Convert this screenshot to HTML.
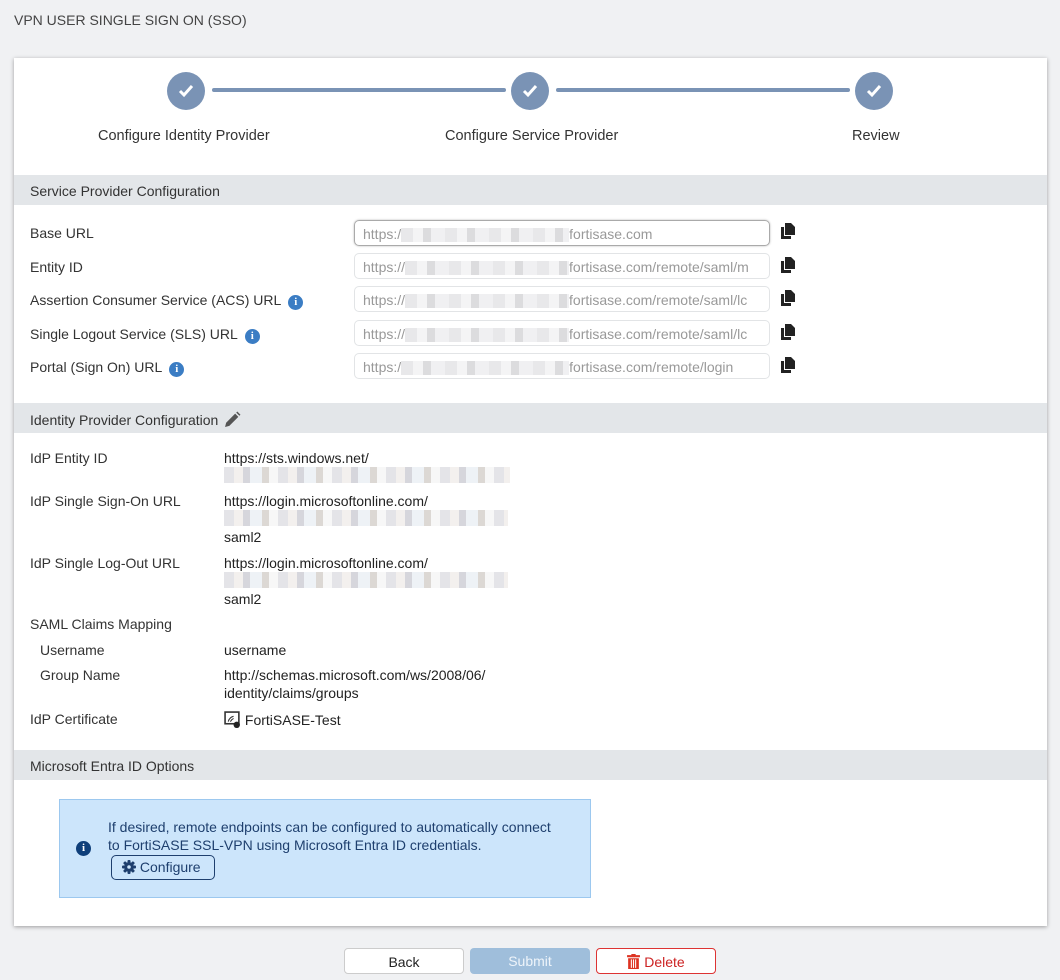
<!DOCTYPE html>
<html><head><meta charset="utf-8"><style>
*{box-sizing:border-box;margin:0;padding:0}
body{width:1060px;height:980px;background:#f0f1f3;font-family:"Liberation Sans",sans-serif;font-size:14px;color:#222;position:relative;overflow:hidden}
.a{position:absolute;white-space:nowrap}
.card{position:absolute;left:14px;top:58px;width:1033px;height:868px;background:#fff;box-shadow:0 1px 4px rgba(0,0,0,.35)}
.sec{position:absolute;left:0;width:1033px;height:30px;background:#e3e6e9;padding:8px 0 0 16px;color:#333}
.circ{position:absolute;width:38px;height:38px;border-radius:50%;background:#7a93b5;top:14px}
.circ svg{position:absolute;left:11px;top:12px}
.line{position:absolute;top:30px;height:4px;background:#7a93b5;border-radius:2px}
.inp{position:absolute;left:340px;width:416px;height:26px;border:1px solid #e2e4e6;border-radius:5px;color:#999;padding:5px 0 0 8px;overflow:hidden;white-space:nowrap}
.blur{display:inline-block;vertical-align:middle;height:14px;background:repeating-linear-gradient(90deg,#e8e8ea 0 12px,#f4f4f5 12px 22px,#dcdcde 22px 30px,#f0f0f2 30px 44px)}
.blur2{position:absolute;height:16px;background:repeating-linear-gradient(90deg,#e4e4e8 0 10px,#f3f0ee 10px 19px,#d6d6dc 19px 26px,#eef2f6 26px 38px,#dcd8d4 38px 45px,#f7f7f7 45px 54px)}
.lbl{position:absolute;left:16px;color:#333;white-space:nowrap}
.val{position:absolute;left:210px;color:#222;white-space:nowrap}
.info{display:inline-block;width:15px;height:15px;border-radius:50%;background:#3b7dc4;color:#fff;font-size:11px;font-weight:bold;text-align:center;line-height:15px;font-family:"Liberation Serif",serif;margin-left:7px;vertical-align:0px}
.btn{position:absolute;top:948px;width:120px;height:26px;border-radius:4px;text-align:center;padding-top:5px}
</style></head><body>
<div class="a" style="left:14px;top:12px;color:#444">VPN USER SINGLE SIGN ON (SSO)</div>
<div class="card">
 <div class="line" style="left:198px;width:294px"></div>
 <div class="line" style="left:542px;width:294px"></div>
 <div class="circ" style="left:153px"><svg width="16" height="14" viewBox="0 0 16 14"><path d="M2 7l4 4 8-9" stroke="#fff" stroke-width="3" fill="none"/></svg></div>
 <div class="circ" style="left:497px"><svg width="16" height="14" viewBox="0 0 16 14"><path d="M2 7l4 4 8-9" stroke="#fff" stroke-width="3" fill="none"/></svg></div>
 <div class="circ" style="left:841px"><svg width="16" height="14" viewBox="0 0 16 14"><path d="M2 7l4 4 8-9" stroke="#fff" stroke-width="3" fill="none"/></svg></div>
 <div class="a" style="left:84px;top:70px;color:#333;font-size:14.5px">Configure Identity Provider</div>
 <div class="a" style="left:431px;top:70px;color:#333;font-size:14.5px">Configure Service Provider</div>
 <div class="a" style="left:838px;top:70px;color:#333;font-size:14.5px">Review</div>

 <div class="sec" style="top:117px">Service Provider Configuration</div>
 <div class="lbl" style="top:167px">Base URL</div>
 <div class="lbl" style="top:201px">Entity ID</div>
 <div class="lbl" style="top:234px">Assertion Consumer Service (ACS) URL<span class="info">i</span></div>
 <div class="lbl" style="top:268px">Single Logout Service (SLS) URL<span class="info">i</span></div>
 <div class="lbl" style="top:301px">Portal (Sign On) URL<span class="info">i</span></div>

 <div class="inp" style="top:162px;border-color:#aaa;box-shadow:0 0 2px #bbb">https:/<span class="blur" style="width:168px"></span>fortisase.com</div>
 <div class="inp" style="top:195px">https://<span class="blur" style="width:164px"></span>fortisase.com/remote/saml/m</div>
 <div class="inp" style="top:228px">https://<span class="blur" style="width:164px"></span>fortisase.com/remote/saml/lc</div>
 <div class="inp" style="top:262px">https://<span class="blur" style="width:164px"></span>fortisase.com/remote/saml/lc</div>
 <div class="inp" style="top:295px">https:/<span class="blur" style="width:168px"></span>fortisase.com/remote/login</div>
 <svg class="a" style="left:767px;top:165px" width="14" height="16" viewBox="0 0 14 16"><path d="M0 4h3v9h7v3H0z M4 0h6l4 4v8H4z" fill="#222"/></svg>
 <svg class="a" style="left:767px;top:199px" width="14" height="16" viewBox="0 0 14 16"><path d="M0 4h3v9h7v3H0z M4 0h6l4 4v8H4z" fill="#222"/></svg>
 <svg class="a" style="left:767px;top:232px" width="14" height="16" viewBox="0 0 14 16"><path d="M0 4h3v9h7v3H0z M4 0h6l4 4v8H4z" fill="#222"/></svg>
 <svg class="a" style="left:767px;top:266px" width="14" height="16" viewBox="0 0 14 16"><path d="M0 4h3v9h7v3H0z M4 0h6l4 4v8H4z" fill="#222"/></svg>
 <svg class="a" style="left:767px;top:299px" width="14" height="16" viewBox="0 0 14 16"><path d="M0 4h3v9h7v3H0z M4 0h6l4 4v8H4z" fill="#222"/></svg>

 <div class="sec" style="top:345px">Identity Provider Configuration <svg width="17" height="17" viewBox="0 0 16 16" style="vertical-align:-3px;margin-left:2px"><path d="M1 15l1-4 8.5-8.5 3 3L5 14z M11.5 1.5l1-1 3 3-1 1z" fill="#555"/></svg></div>
 <div class="lbl" style="top:392px">IdP Entity ID</div>
 <div class="val" style="top:392px">https://sts.windows.net/</div>
 <div class="blur2" style="left:210px;top:409px;width:286px"></div>
 <div class="lbl" style="top:435px">IdP Single Sign-On URL</div>
 <div class="val" style="top:435px">https://login.microsoftonline.com/</div>
 <div class="blur2" style="left:210px;top:452px;width:284px"></div>
 <div class="val" style="top:471px">saml2</div>
 <div class="lbl" style="top:497px">IdP Single Log-Out URL</div>
 <div class="val" style="top:497px">https://login.microsoftonline.com/</div>
 <div class="blur2" style="left:210px;top:514px;width:284px"></div>
 <div class="val" style="top:533px">saml2</div>
 <div class="lbl" style="top:558px">SAML Claims Mapping</div>
 <div class="lbl" style="top:584px;left:26px">Username</div>
 <div class="val" style="top:584px">username</div>
 <div class="lbl" style="top:609px;left:26px">Group Name</div>
 <div class="val" style="top:609px">http://schemas.microsoft.com/ws/2008/06/</div>
 <div class="val" style="top:627px">identity/claims/groups</div>
 <div class="lbl" style="top:653px">IdP Certificate</div>
 <div class="val" style="top:653px"><svg width="17" height="17" viewBox="0 0 16 16" style="vertical-align:-3px"><rect x="1" y="1" width="13" height="11" fill="none" stroke="#333" stroke-width="1.5"/><circle cx="12" cy="13" r="3" fill="#222"/><path d="M4 10q1-4 5-5M6 10q1-2 3-3" stroke="#333" fill="none"/></svg> FortiSASE-Test</div>

 <div class="sec" style="top:692px">Microsoft Entra ID Options</div>
 <div style="position:absolute;left:45px;top:741px;width:532px;height:99px;background:#cce5fb;border:1px solid #9cc8ef"></div>
 <div class="a" style="left:62px;top:783px;width:15px;height:15px;border-radius:50%;background:#0f3f7a;color:#fff;font-size:11px;font-weight:bold;text-align:center;line-height:15px;font-family:'Liberation Serif',serif">i</div>
 <div class="a" style="left:94px;top:760px;color:#1e3f6e;line-height:18px">If desired, remote endpoints can be configured to automatically connect<br>to FortiSASE SSL-VPN using Microsoft Entra ID credentials.</div>
 <div class="a" style="left:97px;top:797px;width:104px;height:25px;border:1px solid #1e3f6e;border-radius:5px;color:#1e3f6e;padding:3px 0 0 10px"><svg width="14" height="14" viewBox="0 0 14 14" style="vertical-align:-2px"><g fill="#1e3f6e"><rect x="5.5" y="0" width="3" height="14" rx="1"/><rect x="0" y="5.5" width="14" height="3" rx="1"/><rect x="5.5" y="0" width="3" height="14" rx="1" transform="rotate(45 7 7)"/><rect x="5.5" y="0" width="3" height="14" rx="1" transform="rotate(-45 7 7)"/><circle cx="7" cy="7" r="4.8"/></g><circle cx="7" cy="7" r="1.8" fill="#cce5fb"/></svg> Configure</div>
</div>
<div class="btn" style="left:344px;background:#fff;border:1px solid #ccc;color:#222">Back</div>
<div class="btn" style="left:470px;background:#9fbedb;color:#eef4fa">Submit</div>
<div class="btn" style="left:596px;background:#fff;border:1px solid #d33;color:#c22"><svg width="13" height="15" viewBox="0 0 12 14" style="vertical-align:-2px"><path d="M0 1h12v2H0zM4 0h4v1H4zM1 4h10v10H1z" fill="#d32"/><path d="M4 5v8M6 5v8M8 5v8" stroke="#fff"/></svg> Delete</div>
</body></html>
